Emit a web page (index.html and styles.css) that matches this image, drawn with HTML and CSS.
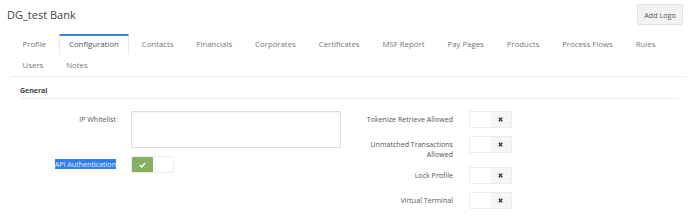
FILE: index.html
```html
<!DOCTYPE html>
<html lang="en">
<head>
<meta charset="utf-8">
<title>DG_test Bank</title>
<link rel="stylesheet" href="styles.css">
</head>
<body>
<header class="page-header">
  <h1 class="title">DG_test Bank</h1>
  <button class="btn" type="button">Add Logo</button>
</header>
<ul class="tabs">
  <li class="tab">Profile</li>
  <li class="tab active">Configuration</li>
  <li class="tab">Contacts</li>
  <li class="tab">Financials</li>
  <li class="tab">Corporates</li>
  <li class="tab">Certificates</li>
  <li class="tab">MSF Report</li>
  <li class="tab">Pay Pages</li>
  <li class="tab">Products</li>
  <li class="tab">Process Flows</li>
  <li class="tab">Rules</li>
  <li class="tab">Users</li>
  <li class="tab">Notes</li>
</ul>
<section class="section">
  <h2 class="section-title">General</h2>
  <div class="form">
    <div class="col col-left">
      <div class="row">
        <label class="label">IP Whitelist</label>
        <textarea class="textarea"></textarea>
      </div>
      <div class="row">
        <label class="label"><span class="selected">API Authentication</span></label>
        <span class="toggle on">
          <span class="knob-on"><svg width="7" height="6" viewBox="0 0 7 6"><path d="M0.8 3.2 L2.6 4.9 L6.2 1.0" fill="none" stroke="#fff" stroke-width="1.4"/></svg></span>
          <span class="knob-blank"></span>
        </span>
      </div>
    </div>
    <div class="col col-right">
      <div class="row">
        <label class="label label-r">Tokenize Retrieve Allowed</label>
        <span class="toggle off"><span class="knob-blank"></span><span class="knob-off"><svg width="5" height="5" viewBox="0 0 5 5"><path d="M0.7 0.7 L4.3 4.3 M4.3 0.7 L0.7 4.3" stroke="#333" stroke-width="1.3"/></svg></span></span>
      </div>
      <div class="row">
        <label class="label label-r">Unmatched Transactions Allowed</label>
        <span class="toggle off"><span class="knob-blank"></span><span class="knob-off"><svg width="5" height="5" viewBox="0 0 5 5"><path d="M0.7 0.7 L4.3 4.3 M4.3 0.7 L0.7 4.3" stroke="#333" stroke-width="1.3"/></svg></span></span>
      </div>
      <div class="row">
        <label class="label label-r">Lock Profile</label>
        <span class="toggle off"><span class="knob-blank"></span><span class="knob-off"><svg width="5" height="5" viewBox="0 0 5 5"><path d="M0.7 0.7 L4.3 4.3 M4.3 0.7 L0.7 4.3" stroke="#333" stroke-width="1.3"/></svg></span></span>
      </div>
      <div class="row">
        <label class="label label-r">Virtual Terminal</label>
        <span class="toggle off"><span class="knob-blank"></span><span class="knob-off"><svg width="5" height="5" viewBox="0 0 5 5"><path d="M0.7 0.7 L4.3 4.3 M4.3 0.7 L0.7 4.3" stroke="#333" stroke-width="1.3"/></svg></span></span>
      </div>
    </div>
  </div>
</section>
</body>
</html>
```

FILE: styles.css
```css
* { box-sizing: border-box; }
html, body {
  margin: 0;
  padding: 0;
  background: #fff;
  font-family: "Open Sans", "Noto Sans", sans-serif;
  color: #555;
}
.page-header {
  display: flex;
  justify-content: space-between;
  align-items: center;
  padding: 4px 17px 0 7px;
  margin-bottom: 9px;
}
.title {
  margin: 0;
  font-size: 11px;
  font-weight: 400;
  line-height: 14px;
  color: #444;
}
.btn {
  width: 46px;
  height: 21px;
  padding: 0;
  font-family: inherit;
  font-size: 7.2px;
  color: #555;
  background: #f2f2f2;
  border: 1px solid #e0e0e0;
  border-radius: 2px;
}
.tabs {
  list-style: none;
  display: flex;
  flex-wrap: wrap;
  margin: 0 13px 0 10px;
  padding: 0 0 0 2px;
  border-bottom: 1px solid #ececec;
}
.tab {
  height: 21px;
  line-height: 17px;
  padding: 0 9.5px;
  margin-right: 2px;
  font-size: 7.8px;
  color: #777;
  border: 1px solid transparent;
  border-top-width: 2px;
}
.tab.active {
  color: #555;
  background: #fff;
  border-color: #e8e8e8;
  border-top-color: #3a85d6;
  border-bottom-color: transparent;
}
.section {
  margin: 0 22px 0 20px;
}
.section-title {
  margin: 0;
  padding: 9px 0 3px;
  font-size: 7px;
  line-height: 9px;
  font-weight: 700;
  color: #444;
  border-bottom: 1px solid #ececec;
}
.form {
  display: grid;
  grid-template-columns: 321px 1fr;
  column-gap: 12px;
  margin-top: 12px;
}
.col {
  display: flex;
  flex-direction: column;
  gap: 8px;
}
.row {
  display: flex;
  align-items: flex-start;
  gap: 15px;
}
.col-right .row { gap: 16px; }
.label {
  width: 96px;
  flex: none;
  text-align: right;
  padding-top: 3px;
  font-size: 7.1px;
  line-height: 10px;
  color: #555;
}
.label-r { width: 100px; }
.selected {
  background: #2f7eea;
  color: #e9f1ff;
}
.textarea {
  width: 210px;
  height: 37px;
  margin: 0;
  border: 1px solid #dcdcdc;
  border-radius: 1px;
  box-shadow: inset 0 1px 1px rgba(0,0,0,0.05);
  resize: none;
}
.toggle {
  display: flex;
  width: 43px;
  height: 17px;
  border: 1px solid #ececec;
  border-radius: 2px;
  overflow: hidden;
  flex: none;
}
.toggle > span {
  flex: 1;
  display: flex;
  align-items: center;
  justify-content: center;
}
.knob-on { background: #86b064; }
.knob-blank { background: #fff; }
.knob-off { background: #f6f6f6; }
```
